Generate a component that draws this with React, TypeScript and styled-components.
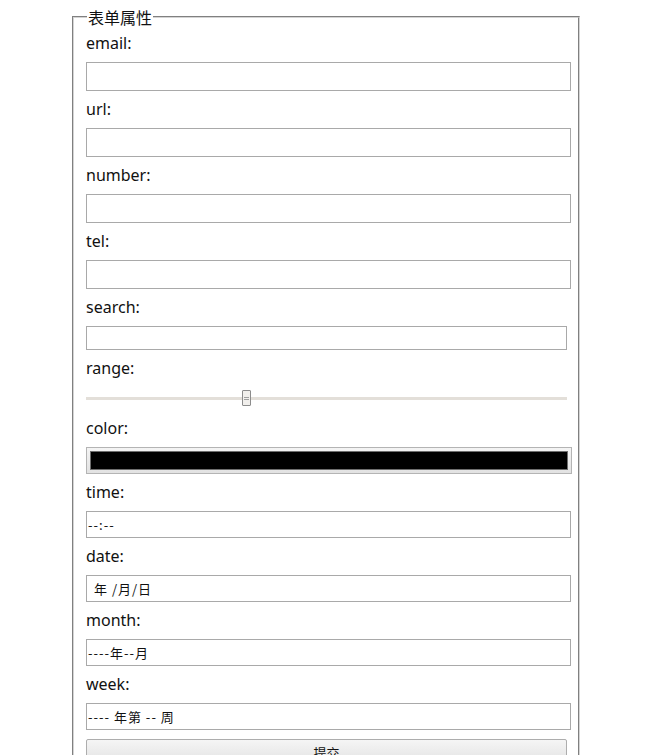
import React from 'react'
import styled, { createGlobalStyle } from 'styled-components'

const GlobalStyle = createGlobalStyle`
  html, body {
    margin: 0;
    background: #fff;
  }

  body {
    font-family: 'Noto Sans', 'Noto Sans CJK SC', sans-serif;
    color: #111;
  }
`

const Page = styled.div`
  padding: 7px 0 0 72px;
`

const FormBox = styled.form`
  width: 508px;
`

const FieldSet = styled.fieldset`
  box-sizing: border-box;
  width: 508px;
  margin: 0;
  padding: 4px 11px 20px 12px;
  border: 2px groove #d4d4d4;
  min-width: 0;

  > legend {
    padding: 0 1px;
    margin-left: 1px;
    font-size: 16px;
    line-height: 20px;
    font-family: 'Noto Sans CJK SC', sans-serif;
  }
`

const Field = styled.div<{ $gap?: number; $after?: number }>`
  display: flex;
  flex-direction: column;
  align-items: flex-start;
  margin-bottom: ${(p) => p.$after ?? 6}px;

  > label {
    display: block;
    font-size: 16px;
    line-height: 25px;
    margin-bottom: ${(p) => p.$gap ?? 6}px;
  }
`

const TextInput = styled.input<{ $h?: number; $indent?: number }>`
  box-sizing: border-box;
  width: calc(100% + 4px);
  height: ${(p) => p.$h ?? 29}px;
  margin: 0;
  padding: 0 2px 0 ${(p) => p.$indent ?? 1}px;
  border: 1px solid #a9a9a9;
  border-radius: 0;
  background: #fff;
  font-family: 'Noto Sans CJK SC', sans-serif;
  font-size: 13px;
  letter-spacing: 1px;
  color: #111;
  outline: none;
`

const SearchInput = styled(TextInput)`
  width: 100%;
  -webkit-appearance: none;
  appearance: none;
`

const Range = styled.input`
  -webkit-appearance: none;
  appearance: none;
  width: 100%;
  height: 23px;
  margin: 0;
  background: transparent;

  &::-webkit-slider-runnable-track {
    height: 3px;
    background: #e3dfd9;
  }

  &::-webkit-slider-thumb {
    -webkit-appearance: none;
    box-sizing: border-box;
    width: 9px;
    height: 16px;
    margin-top: -7px;
    border: 1px solid #8c8c8c;
    border-radius: 1px;
    background:
      linear-gradient(#a0a0a0, #a0a0a0) center 6px / 5px 1px no-repeat,
      linear-gradient(#a0a0a0, #a0a0a0) center 8px / 5px 1px no-repeat,
      #f1efec;
  }
`

const ColorInput = styled.input`
  -webkit-appearance: none;
  appearance: none;
  box-sizing: border-box;
  width: calc(100% + 5px);
  height: 27px;
  margin: 0;
  padding: 0;
  border: 1px solid #b4b4b4;
  background: linear-gradient(#f4f4f4, #e2e2e2);
  cursor: pointer;

  &::-webkit-color-swatch-wrapper {
    padding: 3px;
  }

  &::-webkit-color-swatch {
    border: 1px solid #6e6e6e;
    border-radius: 0;
  }
`

const SubmitButton = styled.button`
  box-sizing: border-box;
  width: 100%;
  height: 27px;
  margin: 0;
  border: 1px solid #adadad;
  border-radius: 2px;
  background: linear-gradient(#f5f5f5, #e1e1e1);
  font-family: 'Noto Sans CJK SC', sans-serif;
  font-size: 13px;
  color: #111;
`

const textFields = ['email', 'url', 'number', 'tel']

export default function App() {
  return (
    <Page>
      <GlobalStyle />
      <FormBox onSubmit={(e) => e.preventDefault()}>
        <FieldSet>
          <legend>表单属性</legend>

          {textFields.map((name) => (
            <Field key={name}>
              <label htmlFor={name}>{name}:</label>
              <TextInput id={name} type="text" />
            </Field>
          ))}

          <Field>
            <label htmlFor="search">search:</label>
            <SearchInput id="search" type="search" $h={24} />
          </Field>

          <Field>
            <label htmlFor="range">range:</label>
            <Range id="range" type="range" min={0} max={100} defaultValue={33} />
          </Field>

          <Field $after={6} $gap={6}>
            <label htmlFor="color">color:</label>
            <ColorInput id="color" type="color" defaultValue="#000000" />
          </Field>

          <Field $after={6}>
            <label htmlFor="time">time:</label>
            <TextInput id="time" type="text" readOnly value="--:--" $h={27} />
          </Field>

          <Field>
            <label htmlFor="date">date:</label>
            <TextInput id="date" type="text" readOnly value="年 /月/日" $h={27} $indent={7} />
          </Field>

          <Field>
            <label htmlFor="month">month:</label>
            <TextInput id="month" type="text" readOnly value="----年--月" $h={27} />
          </Field>

          <Field $after={9}>
            <label htmlFor="week">week:</label>
            <TextInput id="week" type="text" readOnly value="---- 年第 -- 周" $h={27} />
          </Field>

          <SubmitButton type="submit">提交</SubmitButton>
        </FieldSet>
      </FormBox>
    </Page>
  )
}
